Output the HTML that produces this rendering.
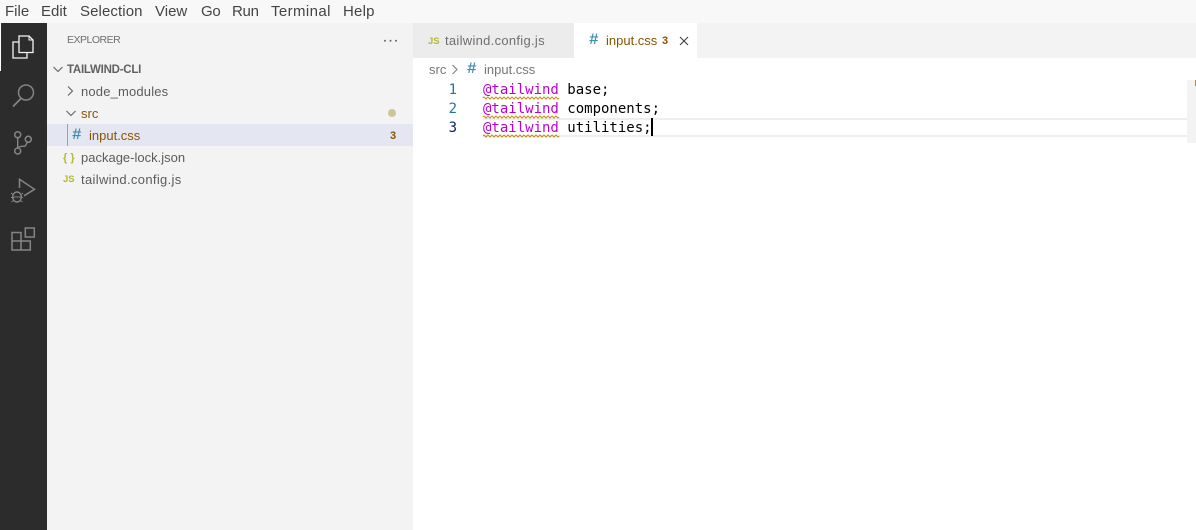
<!DOCTYPE html>
<html><head><meta charset="utf-8"><style>
html,body{margin:0;padding:0;width:1196px;height:530px;overflow:hidden;background:#fff}
body{position:relative;font-family:"Liberation Sans",sans-serif;color:#616161}
.a{position:absolute;white-space:pre}
.m{top:3px;font-size:15px;line-height:18px;color:#444;}
.t{font-size:13px;line-height:22px;height:22px;color:#5c5c5c}
.c{font-family:"DejaVu Sans Mono",monospace;font-size:14px;line-height:19px;height:19px;color:#000}
.k{color:#bb00d6}
.n{font-family:"DejaVu Sans Mono",monospace;font-size:14px;line-height:19px;width:30px;text-align:right;left:427px}
.h{font-family:"Liberation Mono",monospace;font-size:16px;font-weight:bold;line-height:22px;color:#3f8fb3}
svg{position:absolute;overflow:visible}
</style></head><body>
<div class="a" style="left:0;top:0;width:1196px;height:23px;background:#f8f8f8"></div>
<div class="a m" style="left:5px">File</div>
<div class="a m" style="left:41px">Edit</div>
<div class="a m" style="left:80px;letter-spacing:.1px">Selection</div>
<div class="a m" style="left:155px">View</div>
<div class="a m" style="left:201px;letter-spacing:-.3px">Go</div>
<div class="a m" style="left:232px;letter-spacing:-.3px">Run</div>
<div class="a m" style="left:271px;letter-spacing:.4px">Terminal</div>
<div class="a m" style="left:343px;letter-spacing:.2px">Help</div>

<div class="a" style="left:0;top:23px;width:47px;height:507px;background:#2c2c2c"></div>
<div class="a" style="left:0;top:23px;width:1px;height:48px;background:#fff"></div>
<svg style="left:0;top:23px" width="47" height="230" fill="none">
<path d="M19 13h10l4 4v12.500H19z M19 19h-6v16h14v-5.500" stroke="#f4f4f4" stroke-width="1.300"/>
<path d="M29 13v4h4" stroke="#f4f4f4" stroke-width="1"/>
<circle cx="26" cy="69.500" r="7.500" stroke="#858585" stroke-width="1.500"/>
<path d="M21 75.500L13 83.500" stroke="#858585" stroke-width="1.800"/>
<circle cx="17.700" cy="111.700" r="3" stroke="#858585" stroke-width="1.500"/>
<circle cx="28.300" cy="116.300" r="3" stroke="#858585" stroke-width="1.500"/>
<circle cx="17.700" cy="128" r="3" stroke="#858585" stroke-width="1.500"/>
<path d="M17.700 114.700v10.300M18.500 124l3-.7h3.500l2.500-4.200" stroke="#858585" stroke-width="1.400"/>
<path d="M19.500 165v-8.700L34.500 166.300l-10.500 6.500" stroke="#858585" stroke-width="1.500"/>
<ellipse cx="17" cy="174" rx="4.300" ry="5" stroke="#858585" stroke-width="1.400"/>
<path d="M11 170l2 1.500M23 170l-2 1.500M11 174.500h2M21 174.500h2M11.500 179l2-1.500M22.500 179l-2-1.500M13 174h8" stroke="#858585" stroke-width="1"/>
<path d="M12 209.500h9V218h9.300v9H12zM12 218h9v9" stroke="#858585" stroke-width="1.500"/>
<rect x="25.300" y="205" width="9" height="9" stroke="#858585" stroke-width="1.500"/>
</svg>

<div class="a" style="left:47px;top:23px;width:366px;height:507px;background:#f3f3f3"></div>
<div class="a" style="left:67px;top:32px;font-size:10.500px;letter-spacing:-.5px;line-height:16px;color:#6f6f6f">EXPLORER</div>
<svg style="left:383px;top:39px" width="16" height="4"><circle cx="2" cy="1.700" r="1" fill="#666"/><circle cx="7.500" cy="1.700" r="1" fill="#666"/><circle cx="13" cy="1.700" r="1" fill="#666"/></svg>

<svg style="left:52px;top:65px" width="12" height="8" fill="none"><path d="M1.500 2l4.500 4.500L10.500 2" stroke="#616161" stroke-width="1.100"/></svg>
<div class="a t" style="left:67px;top:59px;font-size:11.500px;font-weight:bold;letter-spacing:-.25px;color:#616161">TAILWIND-CLI</div>
<svg style="left:66px;top:85px" width="8" height="12" fill="none"><path d="M2 1.500l4.500 4.500L2 10.500" stroke="#616161" stroke-width="1.100"/></svg>
<div class="a t" style="left:81px;top:81px;letter-spacing:.17px">node_modules</div>
<svg style="left:65px;top:109px" width="12" height="8" fill="none"><path d="M1.500 2l4.500 4.500L10.500 2" stroke="#616161" stroke-width="1.100"/></svg>
<div class="a t" style="left:81px;top:103px;color:#895503">src</div>
<div class="a" style="left:388px;top:109px;width:8px;height:8px;border-radius:50%;background:#cfc596"></div>

<div class="a" style="left:47px;top:124px;width:366px;height:22px;background:#e4e6f1"></div>
<div class="a" style="left:67px;top:124px;width:1px;height:22px;background:#a0a0a0"></div>
<div class="a h" style="left:72px;top:124px">#</div>
<div class="a t" style="left:89px;top:125px;color:#895503">input.css</div>
<div class="a" style="left:390px;top:125px;font-size:11px;line-height:22px;font-weight:bold;color:#895503">3</div>

<div class="a" style="left:63px;top:147px;font-size:11px;line-height:22px;font-weight:bold;color:#b7b73b">{ }</div>
<div class="a t" style="left:81px;top:147px">package-lock.json</div>
<div class="a" style="left:63px;top:169px;font-size:9.500px;line-height:22px;font-weight:bold;color:#b7b73b">JS</div>
<div class="a t" style="left:81px;top:169px;letter-spacing:.33px">tailwind.config.js</div>

<div class="a" style="left:413px;top:23px;width:783px;height:35px;background:#f3f3f3"></div>
<div class="a" style="left:413px;top:23px;width:161px;height:35px;background:#ececec"></div>
<div class="a" style="left:574px;top:23px;width:123px;height:35px;background:#fff"></div>
<div class="a" style="left:428px;top:24px;font-size:9.500px;line-height:35px;font-weight:bold;color:#b7b73b">JS</div>
<div class="a t" style="left:445px;top:29px;letter-spacing:.29px;line-height:23px;color:#6f6f6f">tailwind.config.js</div>
<div class="a h" style="left:589px;top:29px">#</div>
<div class="a t" style="left:606px;top:29px;line-height:23px;color:#895503">input.css</div>
<div class="a" style="left:662px;top:30px;font-size:11px;line-height:22px;font-weight:bold;color:#895503">3</div>
<svg style="left:680px;top:37px" width="8" height="8" fill="none"><path d="M0 0l8 8M8 0l-8 8" stroke="#424242" stroke-width="1.100"/></svg>

<div class="a t" style="left:429px;top:59px;color:#777">src</div>
<svg style="left:451px;top:64px" width="8" height="12" fill="none"><path d="M1.500 1l4.500 4.500L1.500 10" stroke="#777" stroke-width="1"/></svg>
<div class="a h" style="left:467px;top:58px">#</div>
<div class="a t" style="left:484px;top:59px;color:#777">input.css</div>

<div class="a" style="left:483px;top:118px;width:704px;height:15px;border-top:2px solid #eee;border-bottom:2px solid #eee"></div>
<div class="a" style="left:1187px;top:80px;width:9px;height:63px;background:#f3f3f3"></div>
<div class="a" style="left:1195px;top:80px;width:1px;height:6px;background:#c08a1e"></div>

<div class="a n" style="top:81px;color:#237893">1</div>
<div class="a n" style="top:100px;color:#237893">2</div>
<div class="a n" style="top:119px;color:#0b216f">3</div>

<div class="a c" style="left:483px;top:81px"><span class="k">@tailwind</span> base;</div>
<div class="a c" style="left:483px;top:100px"><span class="k">@tailwind</span> components;</div>
<div class="a c" style="left:483px;top:119px"><span class="k">@tailwind</span> utilities;</div>
<svg style="left:483px;top:95.500px" width="76" height="4" fill="none"><path d="M0 2q1-2 2 0t2 0 2 0 2 0 2 0 2 0 2 0 2 0 2 0 2 0 2 0 2 0 2 0 2 0 2 0 2 0 2 0 2 0 2 0 2 0 2 0 2 0 2 0 2 0 2 0 2 0 2 0 2 0 2 0 2 0 2 0 2 0 2 0 2 0 2 0 2 0 2 0 2 0" stroke="#bf8803" stroke-width="1"/></svg>
<svg style="left:483px;top:114.500px" width="76" height="4" fill="none"><path d="M0 2q1-2 2 0t2 0 2 0 2 0 2 0 2 0 2 0 2 0 2 0 2 0 2 0 2 0 2 0 2 0 2 0 2 0 2 0 2 0 2 0 2 0 2 0 2 0 2 0 2 0 2 0 2 0 2 0 2 0 2 0 2 0 2 0 2 0 2 0 2 0 2 0 2 0 2 0 2 0" stroke="#bf8803" stroke-width="1"/></svg>
<svg style="left:483px;top:133.500px" width="76" height="4" fill="none"><path d="M0 2q1-2 2 0t2 0 2 0 2 0 2 0 2 0 2 0 2 0 2 0 2 0 2 0 2 0 2 0 2 0 2 0 2 0 2 0 2 0 2 0 2 0 2 0 2 0 2 0 2 0 2 0 2 0 2 0 2 0 2 0 2 0 2 0 2 0 2 0 2 0 2 0 2 0 2 0 2 0" stroke="#bf8803" stroke-width="1"/></svg>
<div class="a" style="left:651px;top:118px;width:2px;height:18px;background:#000"></div>
</body></html>
